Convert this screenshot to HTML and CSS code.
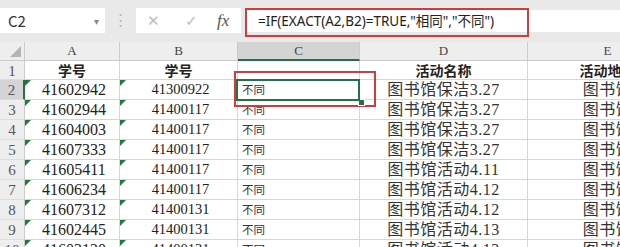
FILE: index.html
```html
<html>
<head>
	<link rel="stylesheet" href="styles.css">
</head>
<body>
<div class="page">
	<div class="bar">
		<div class="namebox"><span>C2</span><span class="caret">&#9662;</span></div>
		<div class="grip">&#8942;</div>
		<div class="fxbox"><span class="cancel">&#10005;</span><span class="ok">&#10003;</span><span class="fx">fx</span></div>
		<div class="input">=IF(EXACT(A2,B2)=TRUE,"相同","不同")</div>
	</div>
	<div class="sheet">
		<div class="corner"><span class="tri"></span></div>
		<div class="colhead">A</div><div class="colhead">B</div><div class="colhead cur">C</div><div class="colhead">D</div><div class="colhead">E</div>

		<div class="rowhead">1</div>
		<div class="cell title">学号</div><div class="cell title">学号</div><div class="cell"></div><div class="cell title">活动名称</div><div class="cell title">活动地点</div>

		<div class="rowhead cur">2</div>
		<div class="cell a txt">41602942</div><div class="cell b txt">41300922</div><div class="cell c sel">不同</div><div class="cell d">图书馆保洁3.27</div><div class="cell d">图书馆</div>

		<div class="rowhead">3</div>
		<div class="cell a txt">41602944</div><div class="cell b txt">41400117</div><div class="cell c">不同</div><div class="cell d">图书馆保洁3.27</div><div class="cell d">图书馆</div>

		<div class="rowhead">4</div>
		<div class="cell a txt">41604003</div><div class="cell b txt">41400117</div><div class="cell c">不同</div><div class="cell d">图书馆保洁3.27</div><div class="cell d">图书馆</div>

		<div class="rowhead">5</div>
		<div class="cell a txt">41607333</div><div class="cell b txt">41400117</div><div class="cell c">不同</div><div class="cell d">图书馆保洁3.27</div><div class="cell d">图书馆</div>

		<div class="rowhead">6</div>
		<div class="cell a txt">41605411</div><div class="cell b txt">41400117</div><div class="cell c">不同</div><div class="cell d">图书馆活动4.11</div><div class="cell d">图书馆</div>

		<div class="rowhead">7</div>
		<div class="cell a txt">41606234</div><div class="cell b txt">41400117</div><div class="cell c">不同</div><div class="cell d">图书馆活动4.12</div><div class="cell d">图书馆</div>

		<div class="rowhead">8</div>
		<div class="cell a txt">41607312</div><div class="cell b txt">41400131</div><div class="cell c">不同</div><div class="cell d">图书馆活动4.12</div><div class="cell d">图书馆</div>

		<div class="rowhead">9</div>
		<div class="cell a txt">41602445</div><div class="cell b txt">41400131</div><div class="cell c">不同</div><div class="cell d">图书馆活动4.13</div><div class="cell d">图书馆</div>

		<div class="rowhead">10</div>
		<div class="cell a txt">41603120</div><div class="cell b txt">41400131</div><div class="cell c">不同</div><div class="cell d">图书馆活动4.13</div><div class="cell d">图书馆</div>
	</div>
	<div class="mark mark-formula"></div>
	<div class="mark mark-cell"></div>
</div>
</body>
</html>
```

FILE: styles.css
```css
body { margin:0; background-color:#ffffff; }
.page { position:relative; width:620px; height:247px; overflow:hidden; }

/* formula bar */
.bar { height:42px; background-color:#e9e9e9; display:flex; align-items:flex-start; padding-top:8px; box-sizing:border-box; }
.namebox { width:105px; height:25px; background-color:#ffffff; display:flex; align-items:center; justify-content:space-between; padding:0 6px 0 8px; box-sizing:border-box; font-family:"Noto Sans CJK SC", "Noto Sans", sans-serif; font-size:15px; color:#333333; }
.caret { color:#888888; font-size:10px; }
.grip { width:31px; text-align:center; color:#b8b8b8; font-size:15px; line-height:25px; }
.fxbox { width:105px; height:25px; background-color:#ffffff; display:flex; align-items:center; box-sizing:border-box; padding-left:11px; }
.cancel { color:#bdbdbd; font-size:15px; width:38px; font-family:"DejaVu Sans", sans-serif; }
.ok { color:#bdbdbd; font-size:15px; width:32px; font-family:"DejaVu Sans", sans-serif; }
.fx { color:#555555; font-family:"Liberation Serif", serif; font-style:italic; font-size:17px; }
.input { flex:1; height:22px; margin-top:2px; margin-left:5px; background-color:#ffffff; font-family:"Noto Sans", "Noto Sans CJK SC", sans-serif; font-size:13.5px; line-height:22px; color:#222222; padding-left:12px; white-space:nowrap; }

/* grid */
.sheet { display:grid; grid-template-columns:25px 95px 118px 122px 168px 160px; grid-template-rows:19px 19px; grid-auto-rows:20px; }
.corner, .colhead, .rowhead, .cell { box-sizing:border-box; border-right:1px solid #d6d6d6; border-bottom:1px solid #d6d6d6; position:relative; }
.corner { background-color:#eeeeee; border-color:#cccccc; }
.tri { position:absolute; right:3px; bottom:3px; width:0; height:0; border-left:11px solid transparent; border-bottom:11px solid #b4b4b4; }
.colhead { background-color:#eeeeee; border-right-color:#cccccc; border-bottom-color:#cccccc; font-family:"Liberation Serif", serif; font-size:13px; color:#444444; text-align:center; line-height:18px; }
.colhead.cur { background-color:#d4d4d4; border-bottom:2px solid #217346; }
.rowhead { background-color:#eeeeee; border-right-color:#cccccc; border-bottom-color:#dddddd; font-family:"Liberation Serif", serif; font-size:15px; color:#555555; text-align:center; line-height:20px; }
.rowhead.cur { background-color:#d4d4d4; border-right:2px solid #217346; }
.cell { font-family:"Liberation Serif", "Noto Sans CJK SC", serif; color:#222222; white-space:nowrap; overflow:hidden; line-height:19px; }
.cell.title { font-family:"Noto Sans CJK SC", sans-serif; font-weight:bold; font-size:14px; text-align:center; line-height:18px; }
.cell.a { font-size:16px; text-align:center; padding-left:4px; }
.cell.b { font-size:14.5px; text-align:center; padding-left:4px; }
.cell.c { font-family:"Noto Sans CJK SC", sans-serif; font-size:11.5px; color:#333333; padding-left:4px; }
.cell.d { font-family:"Liberation Serif", "Noto Sans CJK SC", serif; font-size:16px; text-align:center; color:#333333; letter-spacing:0.5px; }

/* number stored as text indicator */
.cell.txt::before { content:""; position:absolute; left:0; top:0; width:0; height:0; border-top:6px solid #1e7b3c; border-right:6px solid transparent; }

/* active cell */
.cell.sel::after { content:""; position:absolute; left:-2px; top:-1px; right:-1px; bottom:-2px; border:2px solid #217346; }
.cell.sel { overflow:visible; z-index:1; }

/* annotation boxes */
.mark { position:absolute; border:2px solid #d43a3a; box-sizing:border-box; }
.mark-formula { left:245px; top:8px; width:284px; height:29px; }
.mark-cell { left:234px; top:71px; width:142px; height:36px; }
.mark-cell::after { content:""; position:absolute; left:122px; top:26px; width:5px; height:5px; background-color:#217346; border:1px solid #ffffff; }
```
